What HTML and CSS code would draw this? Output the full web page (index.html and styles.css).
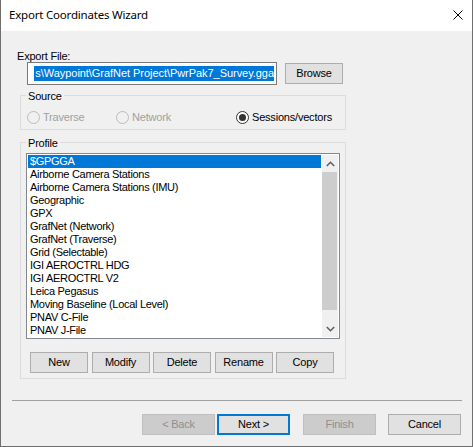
FILE: index.html
```html
<!DOCTYPE html>
<html>
<head>
<meta charset="utf-8">
<title>Export Coordinates Wizard</title>
<link rel="stylesheet" href="styles.css">
</head>
<body>
<div class="window">
  <div class="titlebar">
    <span class="title">Export Coordinates Wizard</span>
    <span class="close"><svg width="10" height="10" viewBox="0 0 10 10"><path d="M0.5 0.5 L9.5 9.5 M9.5 0.5 L0.5 9.5" stroke="#000" stroke-width="1" fill="none"/></svg></span>
  </div>
  <div class="client">
    <div class="export-label">Export File:</div>
    <div class="file-row">
      <div class="textbox"><div class="sel"><span>s\Waypoint\GrafNet Project\PwrPak7_Survey.gga</span></div></div>
      <div class="btn browse">Browse</div>
    </div>
    <div class="group source">
      <span class="caption">Source</span>
      <div class="radios">
        <div class="radio disabled"><span class="circle"></span><span>Traverse</span></div>
        <div class="radio disabled"><span class="circle"></span><span>Network</span></div>
        <div class="radio"><span class="circle checked"></span><span>Sessions/vectors</span></div>
      </div>
    </div>
    <div class="group profile">
      <span class="caption">Profile</span>
      <div class="listbox">
        <div class="items">
          <div class="item selected">$GPGGA</div>
          <div class="item">Airborne Camera Stations</div>
          <div class="item">Airborne Camera Stations (IMU)</div>
          <div class="item">Geographic</div>
          <div class="item">GPX</div>
          <div class="item">GrafNet (Network)</div>
          <div class="item">GrafNet (Traverse)</div>
          <div class="item">Grid (Selectable)</div>
          <div class="item">IGI AEROCTRL HDG</div>
          <div class="item">IGI AEROCTRL V2</div>
          <div class="item">Leica Pegasus</div>
          <div class="item">Moving Baseline (Local Level)</div>
          <div class="item">PNAV C-File</div>
          <div class="item">PNAV J-File</div>
        </div>
        <div class="scrollbar">
          <div class="sb-btn"><svg width="9" height="6" viewBox="0 0 9 6"><path d="M0.8 5 L4.5 1.3 L8.2 5" stroke="#606060" stroke-width="1.6" fill="none"/></svg></div>
          <div class="thumb"></div>
          <div class="track"></div>
          <div class="sb-btn"><svg width="9" height="6" viewBox="0 0 9 6"><path d="M0.8 1 L4.5 4.7 L8.2 1" stroke="#606060" stroke-width="1.6" fill="none"/></svg></div>
        </div>
      </div>
      <div class="profile-buttons">
        <div class="btn small">New</div>
        <div class="btn small">Modify</div>
        <div class="btn small">Delete</div>
        <div class="btn small">Rename</div>
        <div class="btn small">Copy</div>
      </div>
    </div>
    <div class="separator"></div>
    <div class="wizard-buttons">
      <div class="btn wide disabled">&lt; Back</div>
      <div class="btn wide default">Next &gt;</div>
      <div class="btn wide disabled finish">Finish</div>
      <div class="btn wide cancel">Cancel</div>
    </div>
  </div>
</div>
</body>
</html>
```
FILE: styles.css
```css
* { box-sizing: border-box; }
html, body { margin: 0; padding: 0; }
body {
  width: 473px;
  height: 447px;
  overflow: hidden;
  background: #ffffff;
  font-family: "Liberation Sans", Arial, sans-serif;
  font-size: 11px;
  letter-spacing: -0.2px;
  color: #000;
}
.window {
  width: 473px;
  height: 447px;
  border: 1px solid #6f6f6f;
  border-top: 0;
  display: flex;
  flex-direction: column;
}
.titlebar {
  height: 31px;
  flex: none;
  background: #fff;
  display: flex;
  align-items: flex-start;
  justify-content: space-between;
  padding-left: 8px;
}
.title {
  font-family: "Noto Sans", sans-serif;
  font-size: 11.5px;
  letter-spacing: -0.2px;
  line-height: 16px;
  padding-top: 7px;
}
.close {
  width: 10px;
  height: 10px;
  margin-top: 10px;
  margin-right: 9px;
  display: flex;
}
.client {
  flex: 1;
  background: #f0f0f0;
  display: flex;
  flex-direction: column;
  align-items: flex-start;
}
.export-label {
  margin: 19px 0 0 16px;
  line-height: 12px;
}
.file-row {
  display: flex;
  align-items: flex-start;
  margin-left: 26px;
}
.textbox {
  width: 250px;
  height: 23px;
  border: 1px solid #7a7a7a;
  background: #fff;
  padding: 3px 2px 3px 6px;
}
.sel {
  height: 15px;
  line-height: 15px;
  background: #0078d7;
  color: #fff;
  display: flex;
  justify-content: flex-end;
  overflow: hidden;
  white-space: nowrap;
  letter-spacing: -0.05px;
}
.btn {
  background: #e1e1e1;
  border: 1px solid #adadad;
  text-align: center;
  line-height: 19px;
  color: #000;
  white-space: nowrap;
}
.browse {
  width: 58px;
  height: 21px;
  margin: 1px 0 0 8px;
}
.group {
  position: relative;
  width: 326px;
  margin-left: 19px;
  border: 1px solid #dcdcdc;
}
.caption {
  position: absolute;
  left: 5px;
  top: -6px;
  padding: 0 2px;
  background: #f0f0f0;
  line-height: 13px;
}
.source {
  height: 35px;
  margin-top: 10px;
  padding: 15px 0 0 6px;
}
.radios {
  display: grid;
  grid-template-columns: 89px 120px auto;
  height: 13px;
}
.radio {
  display: flex;
  align-items: center;
  gap: 3px;
  line-height: 13px;
}
.radio.disabled { color: #a0a0a0; }
.circle {
  width: 13px;
  height: 13px;
  border-radius: 50%;
  border: 1px solid #333;
  background: #fff;
  display: flex;
  align-items: center;
  justify-content: center;
  flex: none;
}
.radio.disabled .circle {
  border-color: #bcbcbc;
  background: #f0f0f0;
}
.circle.checked::after {
  content: "";
  width: 7px;
  height: 7px;
  border-radius: 50%;
  background: #333;
}
.profile {
  height: 237px;
  margin-top: 12px;
  padding: 10px 0 0 5px;
}
.listbox {
  width: 314px;
  height: 186px;
  border: 1px solid #828790;
  padding: 1px;
  background: #fff;
  display: flex;
}
.items {
  flex: 1;
  overflow: hidden;
  letter-spacing: -0.3px;
}
.item {
  height: 13px;
  line-height: 13px;
  padding-left: 2px;
  white-space: nowrap;
}
.item.selected {
  background: #0078d7;
  color: #fff;
}
.scrollbar {
  width: 17px;
  display: flex;
  flex-direction: column;
  background: #f0f0f0;
  border-left: 1px solid #fff;
}
.sb-btn {
  height: 17px;
  display: flex;
  align-items: center;
  justify-content: center;
}
.thumb {
  height: 138px;
  background: #cdcdcd;
  margin-right: 1px;
}
.track { height: 10px; }
.profile-buttons {
  display: flex;
  gap: 3.5px;
  margin: 13px 0 0 4px;
}
.small {
  width: 58px;
  height: 21px;
}
.separator {
  width: 450px;
  height: 1px;
  margin: 21px 0 0 11px;
  background: #a0a0a0;
}
.wizard-buttons {
  display: flex;
  align-self: flex-end;
  margin: 13px 11px 0 0;
}
.wide {
  width: 73px;
  height: 21px;
}
.btn.disabled {
  background: #cccccc;
  border-color: #bfbfbf;
  color: #8f8f8f;
}
.default {
  border: 2px solid #0078d7;
  line-height: 17px;
  margin-left: 2px;
}
.finish { margin-left: 13px; }
.cancel { margin-left: 12px; }
```
